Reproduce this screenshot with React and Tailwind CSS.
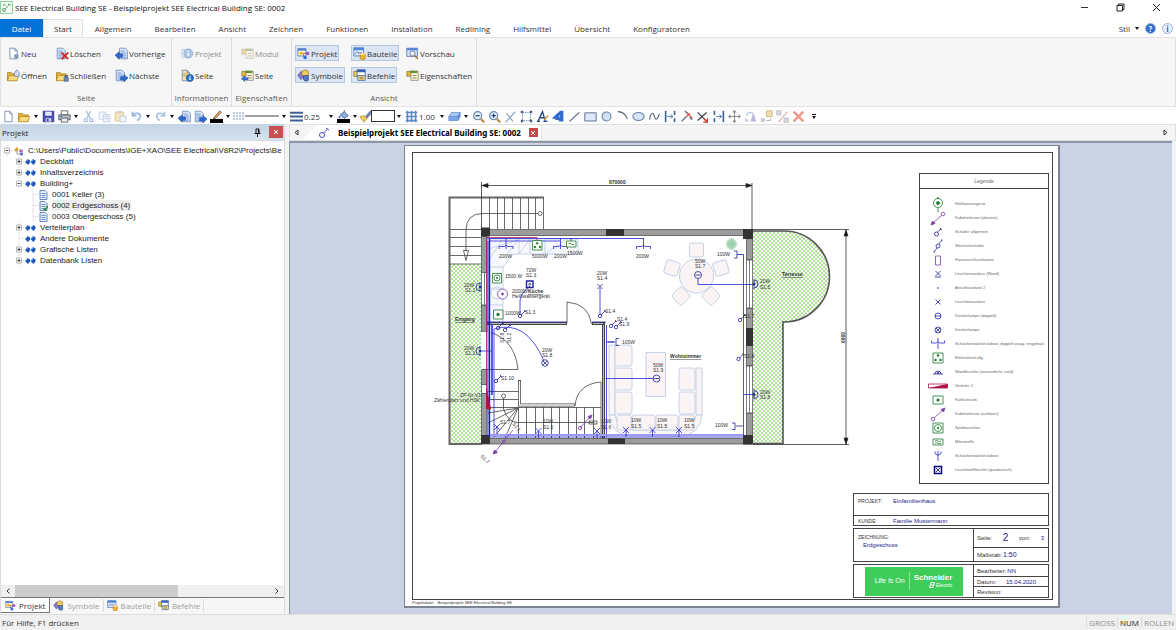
import React, { useState } from 'react';

/* ---------- icons (16 x 16 grid) ---------- */

const Svg = ({ size = 'h-[13px] w-[13px]', children }) => (
  <svg viewBox="0 0 16 16" className={`${size} shrink-0`} fill="none" aria-hidden="true">
    {children}
  </svg>
);

const Sheet = ({ x = 3, y = 1, fill = '#fff' }) => (
  <g transform={`translate(${x} ${y})`}>
    <path d="M.5.5h6l3 3v10h-9z" fill={fill} stroke="#6780a8" />
    <path d="M6.5.5v3h3" stroke="#6780a8" />
  </g>
);

const BluePage = ({ x = 4, y = 1 }) => (
  <g transform={`translate(${x} ${y})`}>
    <path d="M.5.5h7l3 3v10h-10z" fill="#dce8fa" stroke="#6a8abc" />
    <path d="M2 4h5M2 6.500h7M2 9h7M2 11.500h7" stroke="#5f88cf" />
  </g>
);

const Folder = () => (
  <g>
    <path d="M.5 4.500h5l1 1.500h6v8h-12z" fill="#e8b637" stroke="#a87d20" />
    <path d="M2.500 8h12l-2.500 6.500H.5z" fill="#fbdc7c" stroke="#a87d20" strokeWidth=".8" />
  </g>
);

const Hand = () => (
  <g>
    <path d="M1 3h9v3l-3 3H1z" fill="#e8b637" stroke="#7d6b35" strokeWidth=".8" />
    <path d="M6 3h9v11H6V7z" fill="#fdf3cf" stroke="#6f6f6f" strokeWidth=".8" />
    <path d="M8 8h5M8 11h5" stroke="#777" />
    <path d="M5 2h9v3H5z" fill="#6a8f3c" />
  </g>
);

const Lock = () => <path d="M10 10h5v5h-5zM11 10V8h3v2" fill="#6e87ad" stroke="#415b85" strokeWidth=".8" />;

const glyphs = {
  neu: <><Sheet x={3} /><path d="M9 9h5v5H9z" fill="#7f97ba" /></>,
  open: <><Folder /><path d="M9 5l3-4 3 4v4H9z" fill="#cfdcf1" stroke="#55739f" strokeWidth=".8" /></>,
  remove: <><BluePage x={1} /><path d="M7 7l8 8M15 7l-8 8" stroke="#d91f1f" strokeWidth="2.200" /></>,
  close: <><Folder /><Lock /></>,
  prev: <><BluePage x={5} /><path d="M0 10l5-4v2.500h4v4H5V15z" fill="#2f6bd0" stroke="#1c458f" strokeWidth=".7" /></>,
  next: <><BluePage x={1} /><path d="M16 11l-5-4v2.500H7v4h4V16z" fill="#2f6bd0" stroke="#1c458f" strokeWidth=".7" /></>,
  infoOff: <g opacity=".55"><path d="M1 3h10v10H1z" fill="#dde6f4" stroke="#8ea2c2" /><circle cx="9" cy="8" r="5.500" fill="#6f9fdc" stroke="#3d6ba8" /><path d="M9 7v4M9 4.500v1.200" stroke="#fff" strokeWidth="1.800" /></g>,
  info: <><Sheet x={1} fill="#f6e6a6" /><path d="M2.500 6h6M2.500 8.500h6" stroke="#bb8f32" /><circle cx="11" cy="11" r="4.300" fill="#2f74d8" stroke="#174a9c" /><path d="M11 10.500v3M11 8.300v1.200" stroke="#fff" strokeWidth="1.500" /></>,
  hand: <Hand />,
  handOff: <g opacity=".45"><Hand /></g>,
  handPage: <><Hand /><path d="M0 12l5-4v2.500h4v3H5V16z" fill="#2f6bd0" /></>,
  project: (
    <>
      <path d="M1 2h10v9H1z" fill="#fff3c4" stroke="#5b77b3" />
      <path d="M1 2h10v2.500H1z" fill="#4d83dc" />
      <circle cx="5" cy="7.500" r="2" fill="#f0b429" />
      <circle cx="13" cy="8" r="2.200" fill="#a04fc4" />
      <circle cx="10" cy="13" r="2.200" fill="#3b6fd6" />
      <path d="M7 8h4M8 8v4" stroke="#777" />
    </>
  ),
  symbols: (
    <>
      <path d="M1 8l4-5 4 5-4 5z" fill="#8d79cf" stroke="#4a3d8a" strokeWidth=".8" />
      <path d="M6 3l4-2 4 2v5l-4 2-4-2z" fill="#f0cc5b" stroke="#8b6b1c" strokeWidth=".8" />
      <path d="M8 8h6v6l-4 1-2-2z" fill="#5679bd" stroke="#2d4680" strokeWidth=".8" />
    </>
  ),
  parts: (
    <>
      <path d="M1 1h12v10H1z" fill="#eaf1fd" stroke="#4471bd" />
      <path d="M1 1h12v3H1z" fill="#4d83dc" />
      <path d="M3 9c0-4 4-4 4 0M7 7h4" stroke="#3b62a5" />
      <path d="M9 9v5c0 2 6 2 6 0V9z" fill="#f0b429" stroke="#a9761a" strokeWidth=".8" />
      <ellipse cx="12" cy="9" rx="3" ry="1.300" fill="#ffe08a" />
    </>
  ),
  commands: (
    <>
      <path d="M1 3h7v6H1z" fill="#f3cf5c" stroke="#9a7622" />
      <path d="M5 1h10v9H5z" fill="#fff" stroke="#2f5597" />
      <path d="M5 1h10v3H5z" fill="#2f62bb" />
      <path d="M6 8h9v6H6z" fill="#f7df96" stroke="#4a6ea8" />
      <path d="M8 10h5M8 12h5" stroke="#8a6b1c" />
    </>
  ),
  preview: (
    <>
      <path d="M1 1.500h13v10H1z" fill="#dfe9fa" stroke="#4471bd" />
      <path d="M1 1.500h13v2.500H1z" fill="#4d83dc" />
      <circle cx="8" cy="8" r="3.200" fill="#f3f9ff" stroke="#3f5f94" />
      <path d="M10.500 10.500l4 4" stroke="#b9742c" strokeWidth="2" />
    </>
  ),
  page: <Sheet />,
  folder: <Folder />,
  save: <><path d="M1.500 1.500h13v13h-13z" fill="#4a4fb5" stroke="#2c2f80" /><path d="M4 2h8v5H4z" fill="#e8ecfa" /><path d="M4.500 10h7v4.500h-7z" fill="#c9cff0" /><path d="M6 11h2v3H6z" fill="#33388f" /></>,
  print: <><path d="M4 1h8v5H4z" fill="#fff" stroke="#555" /><path d="M1 6h14v6H1z" fill="#b7bcc4" stroke="#4b4f57" /><path d="M4 10h8v5H4z" fill="#e7effa" stroke="#555" /><path d="M3 8h2" stroke="#1f6fd0" strokeWidth="1.500" /></>,
  cut: <g opacity=".7"><path d="M5 1l5 9M11 1L6 10" stroke="#6e9bd0" strokeWidth="1.300" /><circle cx="4.500" cy="12.500" r="2" stroke="#6e9bd0" strokeWidth="1.400" /><circle cx="11.500" cy="12.500" r="2" stroke="#6e9bd0" strokeWidth="1.400" /></g>,
  copy: <g opacity=".5"><path d="M1.500 2.500h8v9h-8z" fill="#e8f0fc" stroke="#7c9dcc" /><path d="M6.500 5.500h8v9h-8z" fill="#dbe7fa" stroke="#7c9dcc" /><path d="M8 8h5M8 10.500h5" stroke="#7c9dcc" /></g>,
  paste: <g opacity=".6"><path d="M1.500 2.500h10v11h-10z" fill="#f0d68c" stroke="#b79546" /><path d="M4 1h5v3H4z" fill="#b3b3b3" /><path d="M7.500 7.500h7v7h-7z" fill="#edf3fc" stroke="#8aa1c4" /></g>,
  undo: <path d="M3 2v5h5M3.500 6.500C7 2 14 4 12.500 9c-.7 2-2 3.500-4 4" stroke="#93b4e4" strokeWidth="2" />,
  redo: <path d="M13 2v5H8M12.500 6.500C9 2 2 4 3.500 9c.7 2 2 3.500 4 4" stroke="#a7c2e8" strokeWidth="2" />,
  pen: <><path d="M5 9l7-8 2 2-7 7-3 1z" fill="#dba95c" stroke="#55504a" strokeWidth=".9" /><path d="M0 11h16v5H0z" fill="#000" /></>,
  weight: <path d="M0 3.500h16M0 8h16M0 13h16" stroke="#3f5f94" strokeWidth="2.500" />,
  bucket: <><path d="M4 6l5-4 5 5-5 3z" fill="#8eb0e0" stroke="#35588f" /><path d="M3 7c-2 2-1 3 0 3s2-1 1-3z" fill="#2f6bd0" /><path d="M9 2V0" stroke="#35588f" /><path d="M0 11h16v5H0z" fill="#000" /></>,
  brush: <><path d="M8 8l6-7 2 2-6 7z" fill="#6d85b5" stroke="#40568a" strokeWidth=".7" /><path d="M1 8l6-1 3 4-4 4z" fill="#f0c968" stroke="#a97f2c" strokeWidth=".8" /></>,
  grid: <path d="M3 1v14M8 1v14M13 1v14M1 3h14M1 8h14M1 13h14" stroke="#5b8ac8" strokeWidth="2" />,
  layer: <><path d="M4 3h11l-3 5H1z" fill="#a8c8f4" stroke="#6a93d0" /><path d="M1 8h11v5H1z" fill="#7ba6e8" stroke="#6a93d0" /><path d="M12 8l3-5v5l-3 5z" fill="#5382cf" stroke="#6a93d0" /></>,
  zoomOut: <><circle cx="7" cy="7" r="5" fill="#dfecfc" stroke="#6582b0" strokeWidth="1.400" /><path d="M4.500 7h5" stroke="#24437c" strokeWidth="1.500" /><path d="M11 11l4 4" stroke="#c4802d" strokeWidth="2.500" /></>,
  zoomIn: <><circle cx="7" cy="7" r="5" fill="#dfecfc" stroke="#6582b0" strokeWidth="1.400" /><path d="M4.500 7h5M7 4.500v5" stroke="#24437c" strokeWidth="1.500" /><path d="M11 11l4 4" stroke="#c4802d" strokeWidth="2.500" /></>,
  cross: <path d="M2 15L14 2M3 4l8 10" stroke="#7b9cb8" strokeWidth="1.300" />,
  select: <><path d="M3 3h10v10H3z" stroke="#3f5f94" strokeDasharray="1.500 1.500" /><path d="M1 1h3v3H1zM12 1h3v3h-3zM1 12h3v3H1zM12 12h3v3h-3z" fill="#4a5c80" /></>,
  text: <><path d="M1 14h4M2.500 14L8 2l3.500 12M4.500 9.500h6M9 14h5" stroke="#274a8c" strokeWidth="1.700" /><path d="M10 12l5-5" stroke="#c99337" strokeWidth="1.800" /></>,
  text3d: <><path d="M0 10l10-9h4v13H9l-1-3z" fill="#2f6bd0" /><path d="M8 8l2-2v3z" fill="#dbe8fb" /><path d="M0 10l8 1v2z" fill="#163f8c" /></>,
  line: <path d="M2 14L14 3" stroke="#4c5c74" strokeWidth="1.300" />,
  rect: <path d="M1 3.500h14v10H1z" fill="#dfeaf8" stroke="#5a6f93" strokeWidth="1.200" />,
  circle: <circle cx="8" cy="8" r="5.500" fill="#cfe0f3" stroke="#6a82a6" strokeWidth="1.300" />,
  arc: <path d="M2 2c6 0 10 3 12 9" stroke="#4c5c74" strokeWidth="1.300" />,
  ellipse: <ellipse cx="8" cy="8" rx="7" ry="5" fill="#d5e4f5" stroke="#6a82a6" strokeWidth="1.300" />,
  spline: <path d="M2 12C3 2 7 3 8 8s4 4 6-3" stroke="#4c5c74" strokeWidth="1.300" />,
  snapL: <><path d="M2 1v14" stroke="#3f5f94" strokeWidth="2" /><path d="M13 1v5M13 10v5" stroke="#3f5f94" strokeWidth="2" /><path d="M4 8h7M8 5.500L11 8l-3 2.500" stroke="#3f6fc4" /></>,
  trim: <><path d="M2 14L8 8" stroke="#5d6470" strokeWidth="1.500" /><path d="M8 8l4-4M8 3l7 7" stroke="#d0473d" strokeWidth="1.500" /><path d="M6 1l3 3M12 9l3 3" stroke="#5d6470" strokeWidth="1.500" /></>,
  crossCut: <><path d="M2 3l12 12M2 13L13 3" stroke="#3d3f4a" strokeWidth="1.500" /><path d="M9 10l5 5M14 10v5H9" stroke="#d23a2e" strokeWidth="1.500" /></>,
  snapR: <><path d="M14 1v14" stroke="#3f5f94" strokeWidth="2" /><path d="M3 1v5M3 10v5" stroke="#3f5f94" strokeWidth="2" /><path d="M5 8h7M9 5.500L12 8l-3 2.500" stroke="#3f6fc4" /></>,
  move: <path d="M8 1v14M1 8h14M6 3l2-2 2 2M6 13l2 2 2-2M3 6L1 8l2 2M13 6l2 2-2 2" stroke="#8d8d8d" strokeWidth="1.300" />,
  rotate: <g opacity=".65"><path d="M1 14V9l6 5z" fill="#b8bcc8" /><path d="M8 14l3-10h1l3 10z" fill="#a28fc6" /><path d="M3 7c1-4 5-5 8-3" stroke="#8aa6cf" strokeWidth="1.600" /></g>,
  scale: <g opacity=".85"><path d="M8 1h7v7H8z" fill="#ead7a0" stroke="#c2a768" /><path d="M1 10h5v5H1z" fill="#bfc3cb" /><path d="M8 13h5v-3" stroke="#999" /></g>,
  mirror: <g opacity=".8"><path d="M1 1h5v5H1zM10 10h5v5h-5z" fill="#d4d7de" stroke="#9b9fa9" /><path d="M3 15L14 2" stroke="#e1968d" strokeWidth="1.300" /></g>,
  del: <path d="M2 2l12 12M14 2L2 14" stroke="#f0988c" strokeWidth="3" />,
};

const Icon = ({ name, size }) => <Svg size={size}>{glyphs[name]}</Svg>;

const Caret = () => (
  <span className="flex w-2 shrink-0 justify-center">
    <svg viewBox="0 0 4 3" className="h-[3px] w-1" aria-hidden="true">
      <path d="M0 0h4L2 3z" fill="#111" />
    </svg>
  </span>
);

/* ---------- ribbon ---------- */

const tabs = ['Allgemein', 'Bearbeiten', 'Ansicht', 'Zeichnen', 'Funktionen', 'Installation', 'Redlining', 'Hilfsmittel', 'Übersicht', 'Konfiguratoren'];

const groups = [
  {
    title: 'Seite',
    box: 'w-[171px]',
    cols: 'grid-cols-[49px_59px_auto] pl-1',
    items: [['neu', 'Neu'], ['remove', 'Löschen'], ['prev', 'Vorherige'], ['open', 'Öffnen'], ['close', 'Schließen'], ['next', 'Nächste']],
  },
  {
    title: 'Informationen',
    box: 'w-[60px]',
    cols: 'grid-cols-1 pl-[7px]',
    items: [['infoOff', 'Projekt', 'off'], ['info', 'Seite']],
  },
  {
    title: 'Eigenschaften',
    box: 'w-[60px]',
    cols: 'grid-cols-1 pl-[7px]',
    items: [['handOff', 'Modul', 'off'], ['handPage', 'Seite']],
  },
  {
    title: 'Ansicht',
    box: 'w-[185px]',
    cols: 'grid-cols-[56px_53px_auto] pl-[3px]',
    items: [['project', 'Projekt', 'on'], ['parts', 'Bauteile', 'on'], ['preview', 'Vorschau'], ['symbols', 'Symbole', 'on'], ['commands', 'Befehle', 'on'], ['hand', 'Eigenschaften']],
  },
];

const look = {
  on: 'border-[#b3c6e2] bg-[#dbe5f3] text-[#333]',
  off: 'border-transparent text-[#8c8c8c]',
};

function Ribbon() {
  return (
    <div className="flex h-[70px] shrink-0 border border-[#e2e2e2] bg-[#f6f6f6]">
      {groups.map((g) => (
        <section key={g.title} className={`${g.box} flex flex-col border-r border-[#dcdcdc] pt-[7px]`}>
          <div className={`${g.cols} grid gap-y-[6px]`}>
            {g.items.map(([icon, label, state]) => (
              <button
                key={icon}
                disabled={state === 'off'}
                className={`${look[state] || 'border-transparent text-[#333]'} flex h-4 items-center gap-px justify-self-start whitespace-nowrap border px-px`}
              >
                <Icon name={icon} />
                {label}
              </button>
            ))}
          </div>
          <h2 className="mt-[9px] flex justify-center whitespace-nowrap text-[#5a5a5a]">{g.title}</h2>
        </section>
      ))}
    </div>
  );
}

function Tool({ name, caret, width = 'w-4' }) {
  return (
    <>
      <button aria-label={name} className={`${width} flex shrink-0 justify-center`}>
        <Icon name={name} />
      </button>
      {caret && <Caret />}
    </>
  );
}

function Toolbar() {
  return (
    <div className="flex h-[17px] shrink-0 items-center bg-white pt-px">
      <Tool name="page" />
      <Tool name="folder" caret />
      <Tool name="save" />
      <Tool name="print" caret />
      <Tool name="cut" />
      <Tool name="copy" />
      <Tool name="paste" />
      <Tool name="undo" caret />
      <Tool name="redo" caret />
      <Tool name="prev" />
      <Tool name="next" />
      <Tool name="pen" caret />
      <button aria-label="Linienart" className="w-12 shrink-0 px-px">
        <svg viewBox="0 0 46 10" className="h-[10px] w-full" fill="none">
          <path d="M0 2h12M0 5h12M0 8h12" stroke="#7d97c4" strokeDasharray="2 1" />
          <path d="M12 5h34" stroke="#444" />
        </svg>
      </button>
      <Caret />
      <Tool name="weight" />
      <select aria-label="Linienstärke" className="w-[23px] shrink-0 appearance-none text-[#333]"><option>0.25</option></select>
      <Caret />
      <Tool name="bucket" caret />
      <Tool name="brush" width="w-3" />
      <button aria-label="Füllfarbe" className="h-3 w-6 shrink-0 border border-[#333] bg-white" />
      <Caret />
      <Tool name="grid" />
      <select aria-label="Raster" className="w-[19px] shrink-0 appearance-none text-[#333]"><option>1.00</option></select>
      <Caret />
      <Tool name="layer" caret />
      {['zoomOut', 'zoomIn', 'cross', 'select', 'text', 'text3d', 'line', 'rect', 'circle', 'arc', 'ellipse', 'spline', 'snapL', 'trim', 'crossCut', 'snapR', 'move', 'rotate', 'scale', 'mirror', 'del'].map((n) => (
        <Tool key={n} name={n} />
      ))}
      <button aria-label="Mehr" className="flex w-4 justify-center">
        <svg viewBox="0 0 4 5" className="h-[5px] w-1"><path d="M0 .5h4" stroke="#111" /><path d="M0 2h4L2 5z" fill="#111" /></svg>
      </button>
    </div>
  );
}

/* ---------- project panel ---------- */

const tree = [
  ['Deckblatt', '+'],
  ['Inhaltsverzeichnis', '+'],
  ['Building+', '-', ['0001 Keller (3)', '0002 Erdgeschoss (4)', '0003 Obergeschoss (5)']],
  ['Verteilerplan', '+'],
  ['Andere Dokumente', ''],
  ['Grafische Listen', '+'],
  ['Datenbank Listen', '+'],
];

const Expander = ({ sign }) => (
  <svg viewBox="0 0 12 11" className="h-[11px] w-3 shrink-0" fill="none">
    <path d="M6 0v11M6 5.500h6" stroke="#bbb" strokeWidth=".7" strokeDasharray="1 1" />
    {sign && <path d="M3.500 3h5v5h-5z" fill="#fff" stroke="#999" strokeWidth=".7" />}
    {sign && <path d={sign === '+' ? 'M4.500 5.500h3M6 4v3' : 'M4.500 5.500h3'} stroke="#222" strokeWidth=".8" />}
  </svg>
);

const Diamonds = () => (
  <svg viewBox="0 0 11 8" className="h-2 w-[11px] shrink-0">
    <path d="M0 4l2.500-3L5 2.500v2L3 7zM5.500 4L8 1l2.500 1.500v2l-2 2.500z" fill="#1f56b8" />
    <path d="M1 3.500l1.500-1.800M6.500 3.500L8 1.700" stroke="#7fb0f0" />
  </svg>
);

const Leaf = ({ active }) => (
  <svg viewBox="0 0 9 10" className="h-[10px] w-[9px] shrink-0" fill="none">
    <path d="M1 .5h5l2 2v7H1z" fill="#e3edfb" stroke="#4a6ea8" strokeWidth=".8" />
    <path d="M2.500 3.500h4M2.500 5.500h4M2.500 7.500h4" stroke="#4a78c4" strokeWidth=".8" />
    {active && <path d="M4.500 7.500l1.500 1.500 3-4" stroke="#1f8f2f" strokeWidth="1.500" />}
  </svg>
);

function ProjectPanel() {
  const [current, setCurrent] = useState('0002 Erdgeschoss (4)');
  const views = [['project', 'Projekt'], ['symbols', 'Symbole'], ['parts', 'Bauteile'], ['commands', 'Befehle']];
  return (
    <aside className="flex w-[285px] shrink-0 flex-col border-x border-[#dcdcdc] bg-white">
      <header className="flex h-[17px] items-center border-b border-[#d5dbe3] bg-gradient-to-b from-[#c3d4e5] to-[#d5e2ee] px-px">
        <h2 className="grow text-[#222]">Projekt</h2>
        <button aria-label="Anheften" className="mr-2">
          <svg viewBox="0 0 7 9" className="h-[9px] w-[7px]" fill="none" stroke="#111"><path d="M2 5V1h3v4M.5 5.500h6M3.500 5.500V9M4.500 1v4" /></svg>
        </button>
        <button aria-label="Schließen" className="flex h-3 w-[14px] items-center justify-center bg-[#c75050]">
          <svg viewBox="0 0 4 4" className="h-1 w-1" stroke="#fff"><path d="M0 0l4 4M4 0L0 4" /></svg>
        </button>
      </header>

      <nav className="grow overflow-hidden whitespace-nowrap pt-1 font-['Liberation_Sans',sans-serif] text-[8px] leading-[11px] text-[#222]">
        <div className="flex items-center">
          <Expander sign="-" />
          <svg viewBox="0 0 12 10" className="mr-[3px] h-[10px] w-3 shrink-0">
            <path d="M1 4l3-3 2 2-3 3z" fill="#e0a92b" /><path d="M7 3l3 1-1 3-3-1z" fill="#b262c4" /><circle cx="8.500" cy="8" r="1.600" fill="#4b74cc" />
            <path d="M4 4v4h4" stroke="#777" fill="none" strokeWidth=".7" />
          </svg>
          C:\Users\Public\Documents\IGE+XAO\SEE Electrical\V8R2\Projects\Be
        </div>
        <ul className="pl-3">
          {tree.map(([label, sign, pages]) => (
            <li key={label}>
              <button className="flex items-center gap-1">
                <span className="flex items-center"><Expander sign={sign} /><Diamonds /></span>
                {label}
              </button>
              {pages && (
                <ul className="pl-[14px]">
                  {pages.map((p) => (
                    <li key={p}>
                      <button className="flex items-center gap-1" onClick={() => setCurrent(p)}>
                        <span className="flex items-center"><Expander /><Leaf active={p === current} /></span>
                        <span className={p === current ? 'bg-[#ededed] pr-px' : ''}>{p}</span>
                      </button>
                    </li>
                  ))}
                </ul>
              )}
            </li>
          ))}
        </ul>
      </nav>

      <div className="flex h-3 items-center bg-[#f0f0f0]">
        <button aria-label="Nach links" className="flex w-[14px] justify-center">
          <svg viewBox="0 0 4 6" className="h-[6px] w-1" fill="none" stroke="#333"><path d="M3.500.5L1 3l2.500 2.500" /></svg>
        </button>
        <div className="h-full grow"><div className="h-full w-[64%] bg-[#cdcdcd]" /></div>
        <button aria-label="Nach rechts" className="flex w-[14px] justify-center">
          <svg viewBox="0 0 4 6" className="h-[6px] w-1" fill="none" stroke="#333"><path d="M.5.5L3 3 .5 5.500" /></svg>
        </button>
      </div>
      <div className="flex h-[17px] border-t border-[#777] bg-[#f7f7f7] pb-px">
        {views.map(([icon, label], i) => (
          <button
            key={label}
            className={i === 0
              ? 'flex items-center gap-[3px] border-b border-r border-[#777] bg-white px-1 text-[#333]'
              : 'my-px flex items-center gap-[3px] border-r border-[#dcdcdc] px-[3px] text-[#a0a0a0]'}
          >
            <Icon name={icon} size="h-[11px] w-[11px]" />
            {label}
          </button>
        ))}
      </div>
    </aside>
  );
}

/* ---------- legend ---------- */

const N = '#20209a';
const G = '#1d7a2c';
const P = '#7a3fa8';

const legend = [
  ['Heißwassergerät', <g stroke={G}><circle cx="10" cy="6" r="4.500" /><circle cx="10" cy="6" r="1.500" fill={G} /><path d="M10 0v1.500M10 10.500V15M9 1h2" /></g>],
  ['Kabelreferenz (abwärts)', <g stroke={P}><circle cx="15" cy="3" r="1.800" /><path d="M13.500 4.500L4 13" /><path d="M3 14l1.500-4L7 12.500z" fill={P} /></g>],
  ['Schalter allgemein', <g stroke={N}><circle cx="8.500" cy="9" r="2" /><path d="M9.500 7L13 4M12 3l2 2" /></g>],
  ['Wechselschalter', <g stroke={N}><circle cx="10" cy="7" r="2" /><path d="M11 5l3-4M13 1h1.500M9 9l-3 4M5.500 13H7" /></g>],
  ['Hausanschlusskasten', <path d="M7.500 3h5v9h-5z" stroke={P} />],
  ['Leuchtenauslass (Wand)', <path d="M7.500 4l5 5M12.500 4l-5 5M7 10h6" stroke={N} />],
  ['Anschlussdose 2', <circle cx="10" cy="7" r=".8" fill={N} />],
  ['Leuchtenauslass', <path d="M7.500 4.500l5 5M12.500 4.500l-5 5" stroke={N} />],
  ['Deckenlampe (doppelt)', <g stroke={N}><circle cx="10" cy="7" r="3" /><path d="M7 7h6" /></g>],
  ['Deckenlampe', <g stroke={N}><circle cx="10" cy="7" r="3" /><path d="M8 5l4 4M12 5l-4 4" /></g>],
  ['Schutzkontaktsteckdose, doppelt waag. eingebaut', <path d="M10 1v11M3.500 3.500v2.500h5L10 4.500 11.500 6h5V3.500" stroke="#2626e0" />],
  ['Elektroherd allg.', <g><path d="M5 2h10v10H5z" stroke={G} /><circle cx="10" cy="4.500" r="1.200" fill={G} /><circle cx="7.500" cy="9" r="1.200" fill={G} /><circle cx="12.500" cy="9" r="1.200" fill={G} /></g>],
  ['Wandleuchte (wasserdicht, rund)', <g stroke={N}><path d="M5 9h10M7 9a3 3 0 016 0" /><circle cx="10" cy="8" r=".7" fill={N} /></g>],
  ['Verteiler 1', <g><path d="M.5 5h19v4H.5z" stroke="#b0104a" /><path d="M.5 9L19.500 5v4z" fill="#b0104a" /></g>],
  ['Kühlschrank', <g><path d="M5 3h10v8H5z" stroke={G} /><circle cx="10" cy="7" r="1.600" fill={G} /></g>],
  ['Kabelreferenz (aufwärts)', <g stroke={P}><circle cx="5" cy="12" r="1.800" /><path d="M6.500 10.500L15 3" /><path d="M17 1l-4 1.500L15.500 5z" fill={P} /></g>],
  ['Spülmaschine', <g stroke={G}><path d="M5 2h10v10H5z" /><circle cx="10" cy="7" r="3.500" /><circle cx="10" cy="7" r=".8" fill={G} /></g>],
  ['Mikrowelle', <g stroke={G}><path d="M5 4h10v6H5zM7 6q1.500-1 3 0t3 0M7 8.300q1.500-1 3 0t3 0" /></g>],
  ['Schutzkontaktsteckdose', <path d="M10 2v10M7 2.500v2L10 6.500l3-2v-2" stroke="#2626e0" />],
  ['Leuchtstoffleuchte (quadratisch)', <g stroke="#000080"><path d="M6.500 3.500h7v7h-7z" strokeWidth="1.500" /><path d="M8 5l4 4M12 5L8 9" /></g>],
];

function Legend() {
  return (
    <section className="w-[130px] self-end border border-[#444] bg-white text-[4px] leading-[14px] text-[#666]">
      <h3 className="border-b border-[#444] text-center text-[5px]">Legende</h3>
      <ul className="pb-[6px] pt-2">
        {legend.map(([label, art]) => (
          <li key={label} className="flex h-[14px] items-center gap-[7px] whitespace-nowrap pl-2">
            <svg viewBox="0 0 20 14" className="h-[14px] w-5 shrink-0 overflow-visible" fill="none" strokeWidth=".8">{art}</svg>
            {label}
          </li>
        ))}
      </ul>
    </section>
  );
}

/* ---------- title block ---------- */

const Label = ({ children, w = '' }) => <span className={`${w} shrink-0 text-[#333]`}>{children}</span>;

function TitleBlock() {
  return (
    <section className="flex flex-col gap-[2px] text-[6px] leading-[8px] text-[#22228c]">
      <div className="border border-[#444]">
        <div className="flex h-[21px] pl-1 pt-[3px]"><Label w="w-[35px] text-[5px]">PROJEKT:</Label>Einfamilienhaus</div>
        <div className="flex h-[10px] items-center border-t border-[#444] pl-1"><Label w="w-[35px] text-[5px]">KUNDE:</Label>Familie Mustermann</div>
      </div>
      <div className="flex h-[34px] border border-[#444]">
        <div className="w-[120px] border-r border-[#444] pl-1 pt-1">
          <Label w="text-[5px] block">ZEICHNUNG:</Label>
          <span className="pl-[5px]">Erdgeschoss</span>
        </div>
        <div className="grow">
          <div className="flex h-[19px] items-center justify-between border-b border-[#444] pl-[3px] pr-1">
            <Label>Seite:</Label><span className="text-[10px]">2</span><Label>von:</Label>3
          </div>
          <div className="flex h-[13px] items-center gap-px pl-[3px]"><Label>Maßstab:</Label><span className="text-[7px]">1:50</span></div>
        </div>
      </div>
      <div className="flex border border-[#444]">
        <div className="flex w-[120px] items-center justify-center border-r border-[#444]">
          <div className="flex h-[29px] w-[98px] items-center justify-center gap-1 bg-[#3dcd58] text-white">
            <span className="text-[7px]">Life Is On</span>
            <span className="h-[18px] w-px bg-[#8fe39e]" />
            <span className="flex flex-col items-end">
              <b className="text-[8px]">Schneider</b>
              <span className="flex items-center gap-px text-[5px] leading-[5px]">
                <svg viewBox="0 0 6 6" className="h-[6px] w-[6px]" fill="none" stroke="#fff"><path d="M2 .5h3.500L4 5.500H.5L2 .5M1 3h4" /></svg>
                Electric
              </span>
            </span>
          </div>
        </div>
        <div className="grow">
          <div className="flex h-[11px] items-center gap-px pl-[3px]"><Label>Bearbeiter:</Label>NN</div>
          <div className="flex h-[11px] items-center border-y border-[#444] pl-[3px]"><Label w="w-[29px]">Datum:</Label>15.04.2020</div>
          <div className="flex h-[10px] items-center pl-[3px]"><Label>Revision:</Label></div>
        </div>
      </div>
    </section>
  );
}

/* ---------- floor plan ---------- */

const T = ({ x, y, children, ...rest }) => <text x={x} y={y} {...rest}>{children}</text>;

const DoubleSocket = ({ x }) => (
  <path d={`M${x} 239v11M${x - 7} 250v-2.500h5.500L${x} 246l1.500 1.500h5.500v2.500`} stroke="#2626d0" />
);

const WallLamp = ({ x, y, flip }) => (
  <g stroke={N} fill="none">
    <path d={flip ? `M${x} ${y - 4}a4 4 0 000 8M${x} ${y - 5}v10` : `M${x} ${y - 4}a4 4 0 010 8M${x} ${y - 5}v10`} />
    <circle cx={x} cy={y} r="1" fill={N} />
  </g>
);

const Switch = ({ x, y }) => (
  <g stroke={N}><circle cx={x} cy={y} r="1.700" /><path d={`M${x + 1} ${y - 1}l4-4M${x + 4} ${y - 6}l2 2`} /></g>
);

const Outlet = ({ x, y }) => <path d={`M${x - 3} ${y - 3}l6 6M${x + 3} ${y - 3}l-6 6M${x} ${y}v7`} stroke="#2626d0" />;

function FloorPlan() {
  return (
    <svg viewBox="413 154 440 446" className="h-[446px] w-[440px] shrink-0 overflow-visible" fill="none" strokeWidth=".8">
      <defs>
        <pattern id="lawn" width="4" height="4" patternUnits="userSpaceOnUse">
          <path d="M0 0l4 4M4 0L0 4" stroke="#9ad67c" strokeWidth=".8" />
        </pattern>
      </defs>

      {/* lawn and terrace */}
      <path d="M450 265h31v180h-31z" fill="url(#lawn)" />
      <path d="M753 232h31a45.500 45.500 0 010 91h-1v121h-30z" fill="url(#lawn)" />
      <path d="M753 232h31a45.500 45.500 0 010 91h-1v121.500h-30" stroke="#555" strokeWidth="1.600" />
      <path d="M544 198.500h-94.500V445H482" stroke="#666" strokeWidth="2" />

      {/* outside stairs */}
      <g stroke="#444">
        <path d="M489.500 199v31M497.500 199v31M504.500 199v31M512.500 199v31M520.500 199v31M528.500 199v31M535.500 199v31M543.500 199v31" />
        <path d="M450 230.500h32M450 238.500h31M450 247.500h31M450 256.500h31M450 265h31" />
        <circle cx="540" cy="214.500" r="2" />
        <path d="M538 214.500h-55q-17 0-17 17V252M463.500 251.500h5l-2.500 10z" />
      </g>

      {/* furniture */}
      <g stroke="#b9c9e2" fill="#faf4f4">
        <path d="M488 240h90v15h-65l-10 13v56h-15z" fill="#f7f9fd" />
        <path d="M488 268h15M488 290h15M488 306h15M519 240v15M530 240v15M545 240v15M519 240l-12 15M519 255l11-15M545 255l22-15M488 250l30-9M488 262l14-21" fill="none" />
        <circle cx="497" cy="294" r="6" fill="none" />
        <circle cx="696.500" cy="277" r="17" />
        {[[696.500, 251, 0], [672, 269, 17], [681, 297, 45], [711, 297, 45], [721, 269, -17]].map(([x, y, r]) => (
          <rect key={x} x={x - 7} y={y - 7} width="14" height="14" rx="2" transform={`rotate(${r} ${x} ${y})`} />
        ))}
        <path d="M609 346h6v70h-6zM696 369h6v47h-6z" />
        <path d="M609 416q2 20 22 21h49q20-1 22-21h-6q-2 14-16 15h-49q-14-1-16-15z" />
        {[[615, 346, 17, 21], [615, 369, 17, 22], [615, 393, 17, 22], [679, 369, 16, 22], [679, 393, 16, 22], [617, 416, 14, 15], [632, 416, 23, 15], [656, 416, 22, 15], [679, 416, 15, 15]].map(([x, y, w, h]) => (
          <rect key={`${x}-${y}`} x={x} y={y} width={w} height={h} rx="2" />
        ))}
        <path d="M646 353.500h19.500v44H646z" />
      </g>
      <path d="M726 245h11M731.500 239v12M727.500 241l8 8M735.500 241l-8 8M726.500 243l10 4M726.500 247l10-4M729.500 239.500l4 11M733.500 239.500l-4 11" stroke="#9fd0ae" strokeWidth="1.300" />

      {/* outer walls */}
      <g fill="#9b9b9b" stroke="#444" strokeWidth=".7">
        <path d="M482 230.500h270v6H482zM482 439.500h270v5.500H482z" />
        <path d="M481.500 237h5.500v36.500h-5.500zM481.500 306h5.500v27h-5.500zM481.500 370.500h5.500v15h-5.500zM481.500 394.500h5.500v43h-5.500z" />
        <path d="M746.500 238h6v23h-6zM746.500 309h6v58h-6zM746.500 414h6v24h-6z" />
        <path d="M481.500 273.500h5.500v32.500h-5.500zM481.500 385.500h5.500v9h-5.500zM746.500 261h6v48h-6zM746.500 367h6v47h-6z" fill="#fff" />
        <path d="M481.500 333h5.500v37.500h-5.500z" fill="#fff" stroke="none" />
        <path d="M484.500 274v32M749.500 261v48M749.500 367v47" />
      </g>
      <path d="M481 228.500h9v9h-9zM606 230h18v7h-18zM743 230h10v10h-10zM481 436h9v9h-9zM743 436h10v9.500h-10zM608 439.500h17v5.500h-17zM746 329h7v18h-7z" fill="#333" />

      {/* inner walls, doors and stairs */}
      <path d="M487 324.500h80M592 324.500h13M603.500 324v115M519.500 381v25h55.500" stroke="#444" strokeWidth="3" />
      <path d="M489 324.500h77M593 324.500h10M603.500 326v112" stroke="#bbb" strokeWidth="1" />
      <path d="M519.500 382v24h55" stroke="#fff" strokeWidth="1.500" />
      <g stroke="#444">
        <path d="M567 324v-21q22 2 24.500 22M482 370.500h36q-3-29-27-37M575 407q2-22 26-24v25" />
        <path d="M488 392.500h30M488 400.500h30M488 408.500h113" />
        <path d="M518.500 408v31M526.500 408v31M535.500 408v31M543.500 408v31M551.500 408v31M559.500 408v31M568.500 408v31M576.500 408v31M584.500 408v31M593.500 408v31M601 408v31" />
        <path d="M518 409l-30 5M518 409l-30 15M518 409l-24 29M518 409l-13 30" />
        <circle cx="503.500" cy="397" r="2" />
        <path d="M503.500 399v11q4 13 14 13.500h77M589 422h8v3h-8z" />
      </g>

      {/* dimensions */}
      <g stroke="#333">
        <path d="M481.500 183v46M752 184v46M482 186.500h270M753 230.500h96M753 445.500h96M846 231v214" />
        <path d="M482 186.500l6-2v4zM752 186.500l-6-2v4zM846 231l-2 6h4zM846 445l-2-6h4z" fill="#111" />
      </g>

      {/* cabling */}
      <g stroke="#2626d0">
        <path d="M487.500 239.500h156M571 239v3M488 242v196M490 242h70" />
        <path d="M489.500 240v197.500M492 326v70" stroke="#1414ff" strokeWidth="1.400" />
        <path d="M494 330v105M494 435.500h106M490 438h253M606.500 326v112M743.500 255v183M605.500 379.500h48M698 280v5.500h56M743.500 395.500h11M606 343h8M480 352h12" />
        <path d="M487 323h80M592 323h14" stroke="#20209a" />
        <path d="M530 287q-10 8-10 15v14M600 289v27M494 330q32-10 50 32" />
      </g>
      <path d="M490 436h253" stroke="#9c9cf8" strokeWidth="1.800" />
      <path d="M486.500 400V238.500H537v4" stroke="#a3195b" />
      <path d="M486.500 390v20h4z" fill="#b0104a" stroke="#b0104a" />

      <DoubleSocket x={506} />
      <DoubleSocket x={560.5} />
      <DoubleSocket x={643.5} />
      <WallLamp x={480} y={288} flip />
      <WallLamp x={480} y={352} flip />
      <WallLamp x={754} y={285} />
      <WallLamp x={754} y={395.5} />
      <Switch x={520} y={317} />
      <Switch x={600} y={317} />
      <Switch x={611} y={327} />
      <Switch x={616} y={328} />
      <Switch x={740} y={321} />
      <Switch x={738.5} y={360} />
      <Switch x={496} y={382} />
      <Switch x={505} y={331} />
      <Switch x={498} y={329} />
      <Outlet x={626} y={431} />
      <Outlet x={652.5} y={431} />
      <Outlet x={679} y={431} />
      <Outlet x={538.5} y={432} />
      <Outlet x={597} y={432} />
      <Outlet x={497} y={428} />
      <g stroke={N}>
        <path d="M597.500 285l5 5M602.500 285l-5 5" />
        <circle cx="545" cy="364" r="3.300" /><path d="M543 362l4 4M547 362l-4 4" />
        <circle cx="656.500" cy="379.500" r="3.500" /><path d="M654 379.500h5" />
        <circle cx="698" cy="276" r="3.500" /><path d="M695.500 276h5" />
        <path d="M526.500 282h6.500v6.500h-6.500z" strokeWidth="1.400" /><circle cx="529.700" cy="285.300" r="1" />
        <path d="M743 255.500h-6M734 252h3v7h-3M743 427h-7M732 424h3v6.500h-3M608 343h7M619 339.500h-3v7h3" />
      </g>
      <g stroke={G}>
        <path d="M532.500 241.500h9.500v9.500h-9.500zM566.500 242h9.500v6h-9.500zM492.500 274.500h9v9.500h-9zM493.500 311h9.500v9h-9.500z" fill="#fff" />
        <circle cx="497" cy="279" r="3" />
        <path d="M568.500 245q1.500-1.500 3 0t3 0" />
        <g fill={G}><circle cx="535" cy="248" r=".9" /><circle cx="540" cy="248" r=".9" /><circle cx="537.200" cy="244.300" r=".9" /><circle cx="498" cy="315.500" r="1.300" /><circle cx="497" cy="279" r=".7" /></g>
      </g>
      <g stroke={P}>
        <circle cx="502.500" cy="295" r="5" fill="#fff" /><circle cx="502.500" cy="295" r="1" fill={P} />
        <path d="M513 431l-18 22M580 429l10-11" />
        <path d="M493 455l1.500-4 3 2.500zM592 416l-4 1.500 2.500 2.500z" fill={P} />
        <circle cx="580" cy="429" r="1.700" /><circle cx="504" cy="443" r="1.700" />
      </g>

      {/* lettering */}
      <g fill="#333" fontFamily="'Liberation Sans', sans-serif" fontSize="5">
        <T x="609" y="185" fontWeight="bold">870000</T>
        <T x="-344" y="845" transform="rotate(-90)" fontWeight="bold">6900</T>
        <T x="499" y="259">200W</T>
        <T x="532" y="259">5000W</T>
        <T x="554" y="259">200W</T>
        <T x="567" y="256">1500W</T>
        <T x="636" y="259">200W</T>
        <T x="505" y="279">1500 W</T>
        <T x="526" y="273">72W</T><T x="526" y="278">S1.3</T>
        <T x="512" y="294">2000W</T>
        <T x="528" y="294" fontWeight="bold" textDecoration="underline">Küche</T>
        <T x="512" y="299">Heißwassergerät</T>
        <T x="505" y="316">1000W</T>
        <T x="525" y="315">S1.3</T>
        <T x="597" y="276">20W</T><T x="597" y="281">S1.4</T>
        <T x="605" y="314">S1.4</T>
        <T x="617" y="322">S1.4</T><T x="619" y="327">S1.9</T>
        <T x="622" y="345">100W</T>
        <T x="464" y="288">20W</T><T x="465" y="293">S1.1</T>
        <T x="464" y="351">20W</T><T x="465" y="356">S1.1</T>
        <T x="455" y="322" fontWeight="bold" textDecoration="underline">Eingang</T>
        <T x="542" y="353">20W</T><T x="542" y="358">S1.8</T>
        <T x="501" y="381">S1.10</T>
        <T x="-344" y="504" transform="rotate(-90)">S1.8</T><T x="-344" y="511" transform="rotate(-90)">S1.2</T>
        <T x="460" y="398">ZP-Nr-V1</T>
        <T x="434" y="403">Zählerplatz und HSK</T>
        <T x="500" y="425">S1.7</T>
        <T x="543" y="424">10W</T><T x="543" y="430">S1.6</T>
        <T x="601" y="424">10W</T><T x="601" y="430">S1.6</T>
        <T x="631" y="423">10W</T><T x="631" y="429">S1.5</T>
        <T x="657" y="423">10W</T><T x="657" y="429">S1.5</T>
        <T x="684" y="423">10W</T><T x="684" y="429">S1.5</T>
        <T x="653" y="368">50W</T><T x="653" y="373">S1.9</T>
        <T x="670" y="359" fontWeight="bold" textDecoration="underline">Wohnzimmer</T>
        <T x="695" y="264">50W</T><T x="695" y="269">S1.7</T>
        <T x="717" y="257">100W</T>
        <T x="715" y="428">100W</T>
        <T x="744" y="319">S1.7</T><T x="744" y="359">S1.8</T>
        <T x="760" y="284">20W</T><T x="760" y="290">S1.5</T>
        <T x="760" y="395">20W</T><T x="760" y="400">S1.8</T>
        <T x="782" y="277" fontWeight="bold" textDecoration="underline">Terrasse</T>
        <T x="480" y="458" transform="rotate(40 480 458)">S1.2</T>
        <T x="512" y="425" transform="rotate(50 512 425)">S1.1</T>
      </g>
    </svg>
  );
}

function DrawingArea() {
  return (
    <main className="flex min-w-0 grow flex-col">
      <div className="flex h-[17px] items-stretch border border-[#e0e0e0] bg-[#f5f5f5]">
        <button aria-label="Vorheriges Fenster" className="flex w-3 items-center justify-center">
          <svg viewBox="0 0 5 7" className="h-[7px] w-[5px]" fill="none" stroke="#333"><path d="M4 1v5L1 3.500z" /></svg>
        </button>
        <svg viewBox="0 0 16 16" className="h-full w-4"><path d="M0 16L16 0v16z" fill="#fff" /></svg>
        <div className="flex items-center gap-2 border-r border-[#e0e0e0] bg-white pr-[3px] font-['Noto_Sans',sans-serif] font-bold text-black">
          <svg viewBox="0 0 12 12" className="h-3 w-3" fill="none" stroke="#4a4ad0"><circle cx="4" cy="8" r="2.500" /><path d="M5.500 6l4-4M8 1l3 2" /></svg>
          Beispielprojekt SEE Electrical Building SE: 0002
          <button aria-label="Tab schließen" className="flex h-[9px] w-[9px] items-center justify-center bg-[#c04848]">
            <svg viewBox="0 0 4 4" className="h-1 w-1" stroke="#fff"><path d="M0 0l4 4M4 0L0 4" /></svg>
          </button>
        </div>
        <button aria-label="Nächstes Fenster" className="ml-auto flex w-5 items-center justify-center">
          <svg viewBox="0 0 5 7" className="h-[7px] w-[5px]" fill="none" stroke="#333"><path d="M1 1v5l3-2.500z" /></svg>
        </button>
      </div>
      <div className="mr-1 flex grow items-start justify-center border-l border-t-2 border-[#8e97a5] bg-[#c9d3e3] pl-[2px] pt-[2px]">
        <div className="flex w-[656px] shrink-0 flex-col border border-b-2 border-r-2 border-[#7b8490] bg-white pl-[7px] pr-[5px] pt-[6px] font-['Liberation_Sans',sans-serif]">
          <div className="flex border border-[#444] pr-[3px]">
            <FloorPlan />
            <div className="flex grow flex-col gap-[9px] pt-5">
              <Legend />
              <TitleBlock />
            </div>
          </div>
          <p className="whitespace-nowrap text-[4px] leading-[6px] text-[#333]">Projektdatei: &nbsp; Beispielprojekt SEE Electrical Building SE</p>
        </div>
      </div>
    </main>
  );
}

export default function App() {
  return (
    <div className="flex h-screen flex-col overflow-hidden bg-white font-['Open_Sans',sans-serif] text-[8px] leading-[11px] text-[#333]">
      <header className="flex h-[19px] shrink-0 items-center gap-[2px] pb-1 pr-[2px]">
        <svg viewBox="0 0 13 13" className="h-[13px] w-[13px]" fill="none">
          <path d="M.5.5h12v12H.5z" fill="#f2faf3" stroke="#8fcf9c" /><circle cx="4" cy="9" r="1.500" stroke="#55a868" /><path d="M5 8l4-4M3 4h3M8 3l3 1" stroke="#55a868" />
        </svg>
        <h1 className="grow text-[#111]">SEE Electrical Building SE - Beispielprojekt SEE Electrical Building SE: 0002</h1>
        <div className="flex">
          <button aria-label="Minimieren" className="flex w-9 justify-center">
            <svg viewBox="0 0 9 9" className="h-[9px] w-[9px]" stroke="#333"><path d="M1 4.500h7" /></svg>
          </button>
          <button aria-label="Verkleinern" className="flex w-9 justify-center">
            <svg viewBox="0 0 9 9" className="h-[9px] w-[9px]" fill="none" stroke="#222"><path d="M1 2.500h5.500V8H1zM2.500 2.500V1H8v5.500H6.500" /></svg>
          </button>
          <button aria-label="Schließen" className="flex w-9 justify-center">
            <svg viewBox="0 0 9 9" className="h-[9px] w-[9px]" stroke="#222"><path d="M1 1l7 7M8 1L1 8" /></svg>
          </button>
        </div>
      </header>

      <nav className="flex h-[18px] shrink-0 items-stretch">
        <button className="w-[43px] bg-[#0173d7] text-white">Datei</button>
        <button className="border-x border-t border-[#e0e0e0] bg-[#f9f9f9] px-[10px]">Start</button>
        {tabs.map((t) => <button key={t} className="pl-3 pr-[11px]">{t}</button>)}
        <div className="ml-auto flex items-center gap-1 pr-[3px]">
          <button className="flex items-center gap-[3px]">Stil <Caret /></button>
          <button aria-label="Hilfe" className="mr-[2px] flex h-[11px] w-[11px] items-center justify-center rounded-full border border-[#9db9e6] bg-[#2f66c8] font-bold text-white">?</button>
          <button aria-label="Info" className="flex h-[11px] w-[11px] items-center justify-center rounded-full border border-[#9db3d6] bg-[#e6effc] font-bold text-[#2f66c8]">i</button>
        </div>
      </nav>

      <Ribbon />
      <Toolbar />

      <div className="flex min-h-0 grow gap-1 bg-[#f3f3f3]">
        <ProjectPanel />
        <DrawingArea />
      </div>

      <footer className="flex h-4 shrink-0 items-center border-t border-[#dedede] bg-[#f0f0f0] pl-[2px]">
        <span className="grow">Für Hilfe, F1 drücken</span>
        <span className="border-l border-[#dcdcdc] px-[2px] text-[#8c8c8c]">GROSS</span>
        <span className="border-l border-[#dcdcdc] px-[2px] text-[#222]">NUM</span>
        <span className="border-l border-[#dcdcdc] px-[2px] text-[#8c8c8c]">ROLLEN</span>
      </footer>
    </div>
  );
}
